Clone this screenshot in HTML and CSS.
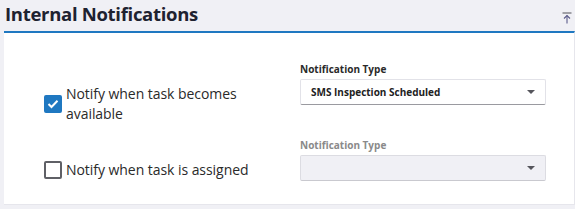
FILE: index.html
```html
<!DOCTYPE html>
<html lang="en">
<head>
<meta charset="utf-8">
<title>Internal Notifications</title>
<link rel="stylesheet" href="styles.css">
</head>
<body>
<div class="panel">
  <div class="panel-header">
    <h2 class="panel-title">Internal Notifications</h2>
    <button class="collapse-btn" aria-label="Collapse">
      <svg width="10" height="12" viewBox="0 0 10 12">
        <line x1="0.5" y1="1" x2="9.5" y2="1" stroke="#6b6b72" stroke-width="1.2"/>
        <line x1="5" y1="3.5" x2="5" y2="11.5" stroke="#5b5b8a" stroke-width="1.1"/>
        <polyline points="2,6.5 5,3.5 8,6.5" fill="none" stroke="#5b5b8a" stroke-width="1.1"/>
      </svg>
    </button>
  </div>
  <div class="card">
    <div class="row">
      <div class="field-label">Notification Type</div>
      <label class="check">
        <span class="box checked">
          <svg width="12" height="10" viewBox="0 0 12 10"><polyline points="1.5,5 4.5,8 10.5,1.8" fill="none" stroke="#fff" stroke-width="2"/></svg>
        </span>
        <span class="check-text">Notify when task becomes available</span>
      </label>
      <div class="select">
        <span class="select-value">SMS Inspection Scheduled</span>
        <span class="caret"></span>
      </div>
    </div>
    <div class="row">
      <div class="field-label disabled">Notification Type</div>
      <label class="check">
        <span class="box"></span>
        <span class="check-text">Notify when task is assigned</span>
      </label>
      <div class="select disabled">
        <span class="select-value"></span>
        <span class="caret"></span>
      </div>
    </div>
  </div>
</div>
</body>
</html>
```
FILE: styles.css
```css
html, body {
  margin: 0;
  padding: 0;
}
body {
  background: #f0f0f5;
  font-family: "Open Sans", "Noto Sans", sans-serif;
  color: #2b2b2b;
  width: 575px;
  height: 209px;
  overflow: hidden;
}
.panel-header {
  height: 31px;
  display: flex;
  align-items: flex-start;
  justify-content: space-between;
  padding: 0 3px 0 5px;
}
.panel-title {
  margin: 0;
  padding-top: 1px;
  font-size: 18.5px;
  font-weight: 700;
  line-height: 26px;
  color: #1e2230;
  letter-spacing: -0.3px;
}
.collapse-btn {
  border: 0;
  background: none;
  padding: 0;
  margin-top: 12px;
  width: 10px;
  height: 12px;
  display: flex;
}
.card {
  margin: 0 0 3px 4px;
  height: 174px;
  box-sizing: border-box;
  background: #fff;
  border-top: 2px solid #1f78c1;
  border-right: 1px solid #e6e6ec;
  border-bottom: 1px solid #e6e6ec;
  padding: 29px 0 0 40px;
  display: flex;
  flex-direction: column;
  gap: 14px;
}
.row {
  display: grid;
  grid-template-columns: 256px 246px;
  grid-template-rows: auto auto;
}
.field-label {
  grid-column: 2;
  grid-row: 1;
  font-size: 10px;
  font-weight: 700;
  line-height: 14px;
  height: 14px;
  margin-bottom: 3px;
  color: #2a2a2a;
}
.field-label.disabled {
  color: #8a8a8a;
}
.check {
  grid-column: 1;
  grid-row: 2;
  display: flex;
  align-items: center;
  gap: 4px;
  margin-top: 5px;
  align-self: start;
}
.box {
  flex: none;
  width: 18px;
  height: 18px;
  box-sizing: border-box;
  border: 2px solid #5f6066;
  border-radius: 2px;
  display: flex;
  align-items: center;
  justify-content: center;
}
.box.checked {
  background: #1f78c1;
  border-color: #1f78c1;
}
.check-text {
  font-size: 14px;
  line-height: 20px;
  width: 192px;
  color: #2a2a2a;
  letter-spacing: -0.05px;
}
.select {
  grid-column: 2;
  grid-row: 2;
  height: 26px;
  box-sizing: border-box;
  border: 1px solid #e2e2e8;
  border-bottom-color: #9a9aa0;
  border-radius: 2px;
  background: #fff;
  display: flex;
  align-items: center;
  justify-content: space-between;
  padding: 0 10px 0 10px;
}
.select.disabled {
  background: #f0f0f5;
  border-color: #dcdce2;
  border-bottom-color: #c9c9cf;
}
.select-value {
  font-size: 10px;
  font-weight: 700;
  color: #222;
}
.caret {
  width: 0;
  height: 0;
  border-left: 4px solid transparent;
  border-right: 4px solid transparent;
  border-top: 4px solid #55555c;
}
```
